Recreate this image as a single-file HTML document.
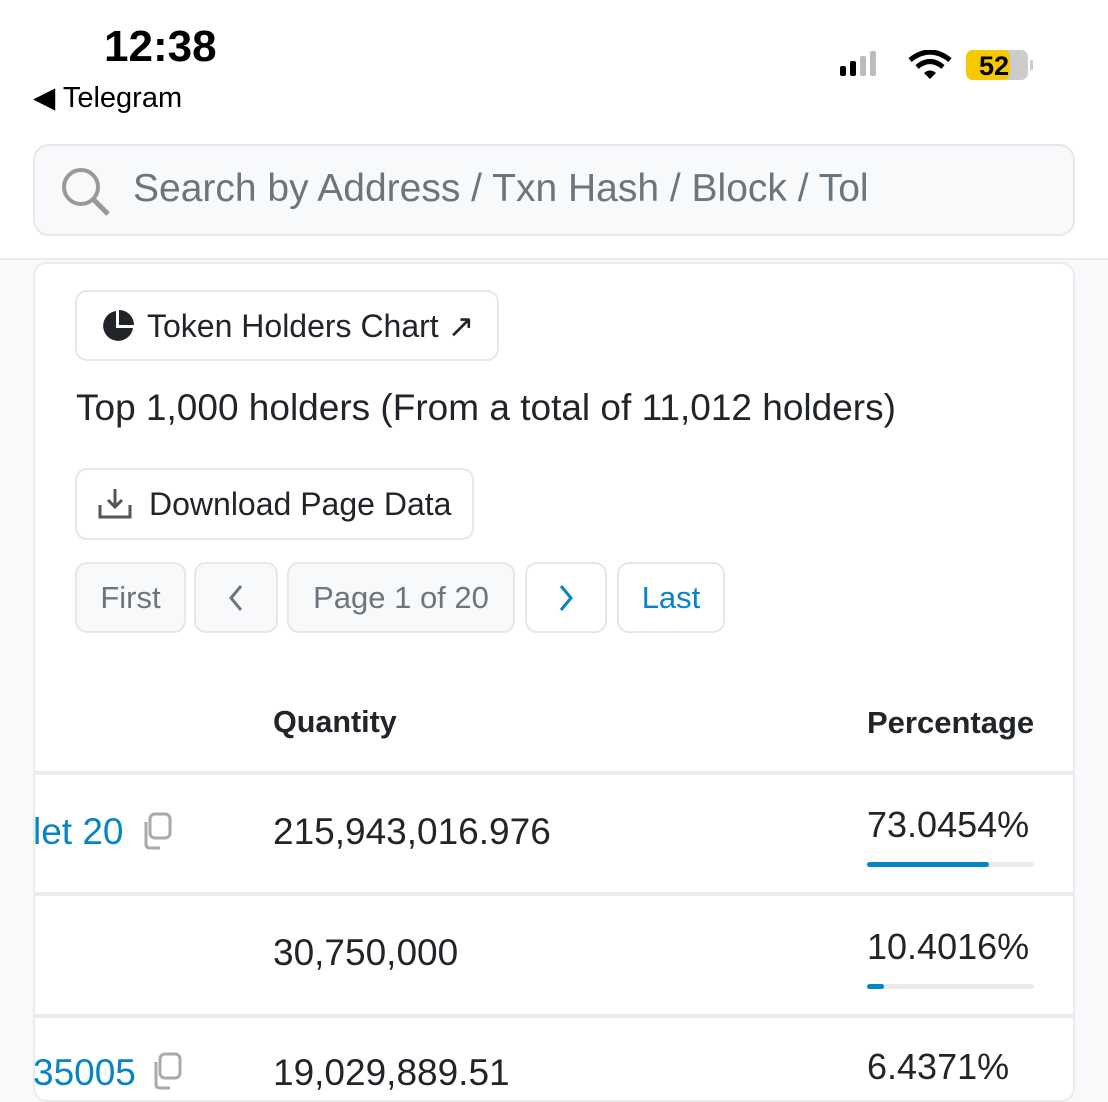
<!DOCTYPE html>
<html><head><meta charset="utf-8"><style>
body{margin:0;width:1108px;height:1088px;overflow:hidden;background:#f8f9fa;font-family:"Liberation Sans",sans-serif;color:#212529;position:relative}
.a{position:absolute;white-space:nowrap}
.btn{position:absolute;border:2px solid #e5e7eb;border-radius:12px;background:#fff;box-sizing:border-box;display:flex;align-items:center;justify-content:center;font-size:31px}
.sep{position:absolute;left:33px;width:1042px;height:4px;background:#e9ecef}
.bar{position:absolute;left:867px;width:167px;height:5px;background:#e9ecef;border-radius:3px}
.bar i{display:block;height:5px;background:#0784c3;border-radius:3px}
</style></head><body>
<div class="a" style="left:0;top:0;width:1108px;height:258px;background:#fff;border-bottom:2px solid #e9ecef"></div>
<div class="a" style="left:104px;top:22px;font-size:44px;font-weight:bold;color:#000">12:38</div>
<div class="a" style="left:33px;top:80px;font-size:29px;color:#000">◀ Telegram</div>
<svg class="a" style="left:838px;top:50px" width="200" height="32">
<rect x="2" y="16" width="6" height="10" rx="2" fill="#000"/><rect x="12" y="11" width="6" height="15" rx="2" fill="#000"/><rect x="22" y="6" width="6" height="20" rx="2" fill="#bbb"/><rect x="32" y="1" width="6" height="25" rx="2" fill="#bbb"/>
<path d="M72 10 Q92 -6 112 10" stroke="#000" stroke-width="5" fill="none"/><path d="M79 17 Q92 6 105 17" stroke="#000" stroke-width="5" fill="none"/><path d="M86 23 L92 29 L98 23 Q92 18 86 23Z" fill="#000"/>
<rect x="128" y="0" width="62" height="30" rx="7" fill="#ccc"/><rect x="128" y="0" width="44" height="30" rx="7" fill="#f5c800"/><rect x="192" y="10" width="3" height="10" fill="#ccc"/>
<text x="141" y="25" font-size="27" font-weight="bold" font-family="Liberation Sans">52</text></svg>
<div class="a" style="left:33px;top:144px;width:1042px;height:92px;box-sizing:border-box;border:2px solid #e5e7eb;border-radius:16px;background:#f8f9fa"></div>
<svg class="a" style="left:60px;top:166px" width="54" height="50"><circle cx="21" cy="21" r="17" stroke="#999" stroke-width="4" fill="none"/><path d="M33 33 L48 48" stroke="#999" stroke-width="5"/></svg>
<div class="a" style="left:133px;top:167px;font-size:39px;color:#6c757d">Search by Address / Txn Hash / Block / Tol</div>
<div class="a" style="left:33px;top:262px;width:1042px;height:840px;background:#fff;border:2px solid #e9ecef;border-radius:14px;box-sizing:border-box"></div>
<div class="btn" style="left:75px;top:290px;width:424px;height:71px;justify-content:flex-start;padding-left:24px">
<svg width="34" height="34" viewBox="0 0 34 34"><path d="M15 2 A15 15 0 1 0 32 19 L15 19Z" fill="#212529"/><path d="M18 1 A15 15 0 0 1 33 16 L18 16Z" fill="#212529"/></svg>
<span style="margin-left:12px;font-size:32px">Token Holders Chart ↗</span></div>
<div class="a" style="left:76px;top:387px;font-size:37px">Top 1,000 holders (From a total of 11,012 holders)</div>
<div class="btn" style="left:75px;top:468px;width:399px;height:72px;justify-content:flex-start;padding-left:20px">
<svg width="36" height="34" viewBox="0 0 36 34"><path d="M18 2 V20 M11 13 L18 20 L25 13" stroke="#555" stroke-width="3" fill="none"/><path d="M3 18 V30 H33 V18" stroke="#555" stroke-width="3" fill="none"/></svg>
<span style="margin-left:16px;font-size:32px">Download Page Data</span></div>
<div class="btn" style="left:75px;top:562px;width:111px;height:71px;background:#f8f9fa;color:#6c757d">First</div>
<div class="btn" style="left:194px;top:562px;width:84px;height:71px;background:#f8f9fa"><svg width="20" height="30"><path d="M15 3 L5 15 L15 27" stroke="#6c757d" stroke-width="3" fill="none"/></svg></div>
<div class="btn" style="left:287px;top:562px;width:228px;height:71px;background:#f8f9fa;color:#6c757d">Page 1 of 20</div>
<div class="btn" style="left:525px;top:562px;width:82px;height:71px"><svg width="20" height="30"><path d="M5 3 L15 15 L5 27" stroke="#0784c3" stroke-width="3" fill="none"/></svg></div>
<div class="btn" style="left:617px;top:562px;width:108px;height:71px;color:#0784c3">Last</div>
<div class="a" style="left:273px;top:705px;font-size:30.5px;font-weight:bold">Quantity</div>
<div class="a" style="left:867px;top:705px;font-size:31px;font-weight:bold">Percentage</div>
<div class="sep" style="top:771px"></div>
<div class="a" style="left:33px;top:811px;font-size:37px;color:#0784c3">let 20</div>
<svg class="a" style="left:140px;top:812px" width="36" height="40"><rect x="10" y="2" width="20" height="24" rx="5" stroke="#aaa" stroke-width="3" fill="none"/><path d="M6 10 V32 Q6 36 10 36 H20" stroke="#aaa" stroke-width="3" fill="none"/></svg>
<div class="a" style="left:273px;top:811px;font-size:37px">215,943,016.976</div>
<div class="a" style="left:867px;top:804px;font-size:36px">73.0454%</div>
<div class="bar" style="top:862px"><i style="width:122px"></i></div>
<div class="sep" style="top:892px"></div>
<div class="a" style="left:273px;top:932px;font-size:37px">30,750,000</div>
<div class="a" style="left:867px;top:926px;font-size:36px">10.4016%</div>
<div class="bar" style="top:984px"><i style="width:17px"></i></div>
<div class="sep" style="top:1014px"></div>
<div class="a" style="left:33px;top:1052px;font-size:37px;color:#0784c3">35005</div>
<svg class="a" style="left:150px;top:1052px" width="36" height="40"><rect x="10" y="2" width="20" height="24" rx="5" stroke="#aaa" stroke-width="3" fill="none"/><path d="M6 10 V32 Q6 36 10 36 H20" stroke="#aaa" stroke-width="3" fill="none"/></svg>
<div class="a" style="left:273px;top:1052px;font-size:37px">19,029,889.51</div>
<div class="a" style="left:867px;top:1046px;font-size:36px">6.4371%</div>
</body></html>
